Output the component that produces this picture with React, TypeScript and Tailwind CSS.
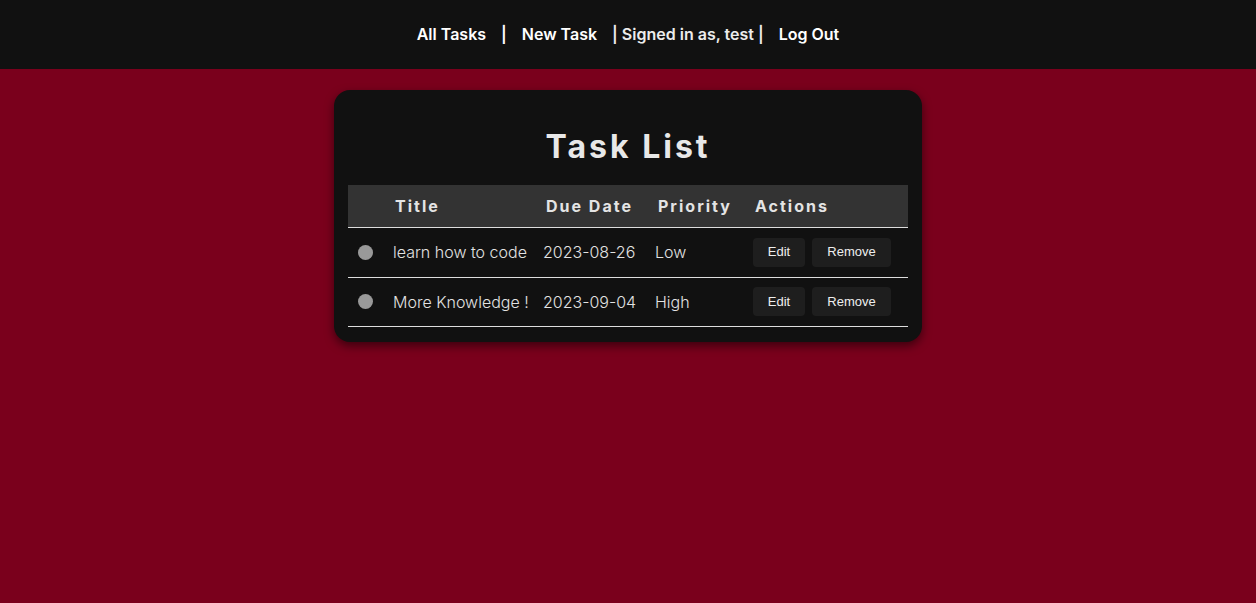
import React from "react";

const tasks = [
  { title: "learn how to code", due: "2023-08-26", priority: "Low" },
  { title: "More Knowledge !", due: "2023-09-04", priority: "High" },
];

export default function App() {
  return (
    <div className="min-h-[603px] bg-[#7a001c] font-['Inter','Noto_Sans',sans-serif]">
      <nav className="h-[69px] bg-[#111111] flex items-center justify-center gap-[15px] text-[16px] font-semibold text-white pb-[2px]">
        <a className="text-white">All Tasks</a>
        <span>|</span>
        <a className="text-white">New Task</a>
        <span className="text-[#ececec]">| Signed in as, test |</span>
        <a className="text-white">Log Out</a>
      </nav>
      <div className="flex justify-center pt-[21px]">
        <div className="w-[588px] bg-[#111111] rounded-[16px] shadow-[0_4px_10px_rgba(0,0,0,0.5)] px-[14px] pb-[15px]">
          <h1 className="text-center text-[32px] font-bold tracking-[3px] text-[#e8e8e8] pt-[37px] pb-[18px] leading-[40px]">
            Task List
          </h1>
          <table className="w-full border-collapse text-left">
            <thead>
              <tr className="bg-[#333333] border-b border-[#dddddd]">
                <th className="w-[35px] h-[42px]"></th>
                <th className="w-[150px] pl-[12px] text-[16px] font-bold tracking-[2px] text-[#e4e4e4]">Title</th>
                <th className="w-[112px] pl-[13px] text-[16px] font-bold tracking-[2px] text-[#e4e4e4]">Due Date</th>
                <th className="w-[98px] pl-[13px] text-[16px] font-bold tracking-[2px] text-[#e4e4e4]">Priority</th>
                <th className="pl-[12px] text-[16px] font-bold tracking-[2px] text-[#e4e4e4]">Actions</th>
              </tr>
            </thead>
            <tbody>
              {tasks.map((t, i) => (
                <tr key={t.title} className={`border-b border-[#dddddd] ${i === 0 ? "h-[50px]" : "h-[49px]"}`}>
                  <td className="pl-[10px]">
                    <div className="w-[15px] h-[15px] rounded-full bg-[#999999]" />
                  </td>
                  <td className="pl-[10px] text-[16px] font-light text-[#e2e2e2]">{t.title}</td>
                  <td className="pl-[10px] text-[16px] font-light text-[#e2e2e2]">{t.due}</td>
                  <td className="pl-[10px] text-[16px] font-light text-[#e2e2e2]">{t.priority}</td>
                  <td className="pl-[10px]">
                    <div className="flex gap-[7px]">
                      <button className="w-[52px] h-[29px] rounded-[4px] bg-[#1e1e1e] text-[13px] text-[#eeeeee] font-['Liberation_Sans',Arial,sans-serif]">Edit</button>
                      <button className="w-[79px] h-[29px] rounded-[4px] bg-[#1e1e1e] text-[13px] text-[#eeeeee] font-['Liberation_Sans',Arial,sans-serif]">Remove</button>
                    </div>
                  </td>
                </tr>
              ))}
            </tbody>
          </table>
        </div>
      </div>
    </div>
  );
}
